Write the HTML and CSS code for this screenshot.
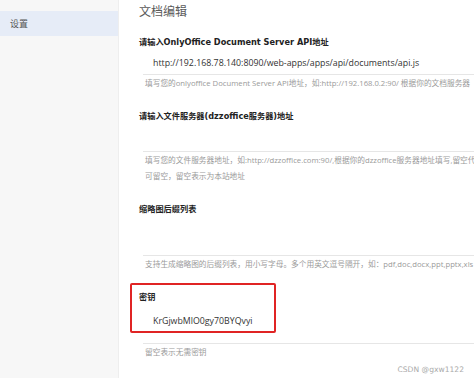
FILE: index.html
```html
<!DOCTYPE html>
<html lang="zh-CN">
<head>
<meta charset="utf-8">
<title>文档编辑</title>
<link rel="stylesheet" href="styles.css">
</head>
<body>
<div class="page">
  <aside class="sidebar">
    <div class="nav-item active">设置</div>
  </aside>
  <main class="main">
    <h1 class="title">文档编辑</h1>

    <section class="field">
      <div class="label">请输入OnlyOffice Document Server API地址</div>
      <div class="input">http://192.168.78.140:8090/web-apps/apps/api/documents/api.js</div>
      <div class="help">填写您的onlyoffice Document Server API地址，如:http://192.168.0.2:90/ 根据你的文档服务器</div>
    </section>

    <section class="field">
      <div class="label">请输入文件服务器(dzzoffice服务器)地址</div>
      <div class="input input-short"></div>
      <div class="help">填写您的文件服务器地址，如:http://dzzoffice.com:90/,根据你的dzzoffice服务器地址填写,留空代</div>
      <div class="help">可留空，留空表示为本站地址</div>
    </section>

    <section class="field">
      <div class="label">缩略图后缀列表</div>
      <div class="input input-tall"></div>
      <div class="help">支持生成缩略图的后缀列表，用小写字母。多个用英文逗号隔开，如：pdf,doc,docx,ppt,pptx,xls</div>
    </section>

    <section class="field field-key">
      <div class="label">密钥</div>
      <div class="input input-tall input-key">KrGjwbMlO0gy70BYQvyi</div>
      <div class="help">留空表示无需密钥</div>
      <div class="highlight"></div>
    </section>

    <div class="watermark">CSDN @gxw1122</div>
  </main>
</div>
</body>
</html>
```

FILE: styles.css
```css
html, body {
  margin: 0;
  padding: 0;
  background: #ffffff;
}
body {
  width: 474px;
  height: 380px;
  overflow: hidden;
  font-family: "DejaVu Sans", "Noto Sans CJK SC", sans-serif;
}
.page {
  display: flex;
  height: 380px;
}
.sidebar {
  width: 119px;
  height: 378px;
  flex: none;
  background: #f7f7f7;
  border-right: 1px solid #eeeeee;
  padding-top: 11px;
  box-sizing: border-box;
}
.nav-item {
  height: 25px;
  line-height: 25px;
  padding-left: 10px;
  font-family: "Noto Sans CJK SC", sans-serif;
  font-size: 9px;
  color: #555;
}
.nav-item.active {
  background: #e6ecf7;
}
.main {
  position: relative;
  flex: 1;
  min-width: 0;
  overflow: hidden;
  padding-left: 20px;
  white-space: nowrap;
}
.title {
  margin: 0;
  height: 22px;
  line-height: 22px;
  font-family: "Noto Sans CJK SC", sans-serif;
  font-weight: normal;
  font-size: 12px;
  color: #5a5a5a;
}
.field {
  position: relative;
  margin-top: 18px;
}
.field:first-of-type {
  margin-top: 13px;
}
.label {
  height: 14px;
  line-height: 14px;
  font-family: "DejaVu Sans", "Noto Sans CJK SC", sans-serif;
  font-weight: bold;
  font-size: 8.2px;
  color: #222;
}
.input {
  margin-left: 4px;
  height: 26px;
  box-sizing: border-box;
  padding: 7px 0 0 10px;
  line-height: 14px;
  border-bottom: 1px solid #e6e6e6;
  font-family: "Open Sans", "Noto Sans CJK SC", sans-serif;
  font-size: 8.8px;
  color: #333;
}
.input-short {
  height: 29px;
}
.input-tall {
  height: 40px;
}
.input-key {
  padding-top: 10px;
}
.help {
  margin-left: 6px;
  height: 16px;
  line-height: 16px;
  font-family: "Open Sans", "Noto Sans CJK SC", sans-serif;
  font-size: 7.7px;
  color: #9a9a9a;
}
.highlight {
  position: absolute;
  left: -9px;
  top: -7px;
  width: 146px;
  height: 50px;
  box-sizing: border-box;
  border: 2px solid #e02424;
  border-radius: 2px;
}
.watermark {
  position: absolute;
  right: 10px;
  bottom: 6px;
  font-family: "DejaVu Sans", sans-serif;
  font-size: 7.6px;
  color: #aaaaaa;
}
```
